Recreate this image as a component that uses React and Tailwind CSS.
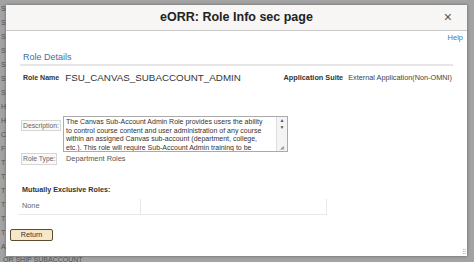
import React from "react";

const bgLetters = ["S", "S", "S", "S", "S", "S", "S", "H", "H", "C", "F", "T", "T", "T", "T", "T", "T", "A"];

const descLines = [
  "The Canvas Sub-Account Admin Role provides users the ability",
  "to control course content and user administration of any course",
  "within an assigned Canvas sub-account (department, college,",
  "etc.). This role will require Sub-Account Admin training to be",
];

export default function App() {
  return (
    <div
      className="relative h-[262px] w-[474px] overflow-hidden bg-[#a3a3a3]"
      style={{ fontFamily: '"Liberation Sans", Arial, sans-serif' }}
    >
      {/* page behind the dialog */}
      <div className="flex flex-col pl-[1px] pt-[2px] text-[7px] leading-[14px] text-[#555]">
        {bgLetters.map((l, i) => (
          <span key={i}>{l}</span>
        ))}
      </div>
      <div className="absolute left-[3px] top-[256px] whitespace-nowrap text-[7px] leading-[7px] text-[#555]">
        OR SHIP SUBACCOUNT
      </div>

      {/* dialog */}
      <div className="absolute left-[6px] top-[5px] flex h-[251px] w-[461px] flex-col bg-white shadow-[0_0_3px_rgba(0,0,0,0.4)]">
        <div className="relative flex h-[26px] shrink-0 items-center justify-center border-b border-[#c8c8c8] bg-[#f7f6f4]">
          <span className="text-[12.5px] font-bold text-[#222]">eORR: Role Info sec page</span>
          <span className="absolute right-[15px] top-[5px] text-[14px] leading-[14px] text-[#555]">×</span>
        </div>

        <div className="flex justify-end pr-[4px] pt-[2px]">
          <span className="text-[7.5px] leading-[9px] text-[#4a78ab]">Help</span>
        </div>

        <div className="mx-[14px] mt-[10px] border-b-2 border-[#e6e6e6] pb-[1px] pl-[3px]">
          <span className="block text-[9px] leading-[11px] text-[#44709e]">Role Details</span>
        </div>

        <div className="mt-[6px] flex h-[12px] items-center whitespace-nowrap pl-[17px] pr-[15px]">
          <span className="text-[7px] font-bold text-[#333]">Role Name</span>
          <span className="ml-[6px] text-[9.8px] text-[#333]">FSU_CANVAS_SUBACCOUNT_ADMIN</span>
          <span className="ml-auto mr-[5px] self-start pt-[1px] text-[7.3px] font-bold text-[#333]">Application Suite</span>
          <span className="self-start pt-[1px] text-[7.3px] text-[#444]">External Application(Non-OMNI)</span>
        </div>

        <div className="mt-[32px] flex items-start pl-[15px]">
          <span className="mt-[4px] w-[40px] shrink-0 whitespace-nowrap border border-[#d6d6d6] bg-[#fafafa] px-[1px] text-[6.8px] leading-[9px] text-[#666]">
            Description:
          </span>
          <div className="ml-[2px] flex h-[36px] w-[225px] border border-[#aaa] bg-white">
            <div className="flex-1 overflow-hidden pl-[2px] pt-[1px] text-[7px] leading-[8.6px] text-[#333]">
              {descLines.map((l, i) => (
                <div key={i} className="whitespace-nowrap">
                  {l}
                </div>
              ))}
            </div>
            <div className="flex w-[11px] flex-col items-center border-l border-[#ddd] bg-[#f4f4f4] text-[5px] leading-[7px] text-[#555]">
              <span>▲</span>
              <span>▼</span>
              <span className="mt-auto text-[#999]">◢</span>
            </div>
          </div>
        </div>

        <div className="mt-[1px] flex items-center pl-[15px]">
          <span className="w-[36px] whitespace-nowrap border border-[#d6d6d6] bg-[#fafafa] px-[1px] text-[6.8px] leading-[10px] text-[#666]">
            Role Type:
          </span>
          <span className="ml-[9px] text-[7.4px] text-[#555]">Department Roles</span>
        </div>

        <div className="mt-[20px] pl-[16px]">
          <span className="block text-[7.2px] font-bold leading-[9px] text-[#333]">Mutually Exclusive Roles:</span>
        </div>

        <div className="ml-[12px] mt-[5px] flex h-[16px] w-[309px] border-b border-r border-[#e8e8e8]">
          <div className="flex w-[123px] items-center border-r border-[#e8e8e8] pl-[4px] text-[7.3px] text-[#666]">
            None
          </div>
          <div className="flex-1" />
        </div>

        <div className="mt-[14px] pl-[4px]">
          <button className="block h-[12px] w-[43px] rounded-[2px] border border-[#5c4b33] bg-[#f6e7c9] text-[7.2px] leading-[10px] text-[#333]">
            Return
          </button>
        </div>

        <div className="absolute bottom-[1px] right-[1px] text-[6px] leading-[6px] text-[#888]">⠿</div>
      </div>
    </div>
  );
}
